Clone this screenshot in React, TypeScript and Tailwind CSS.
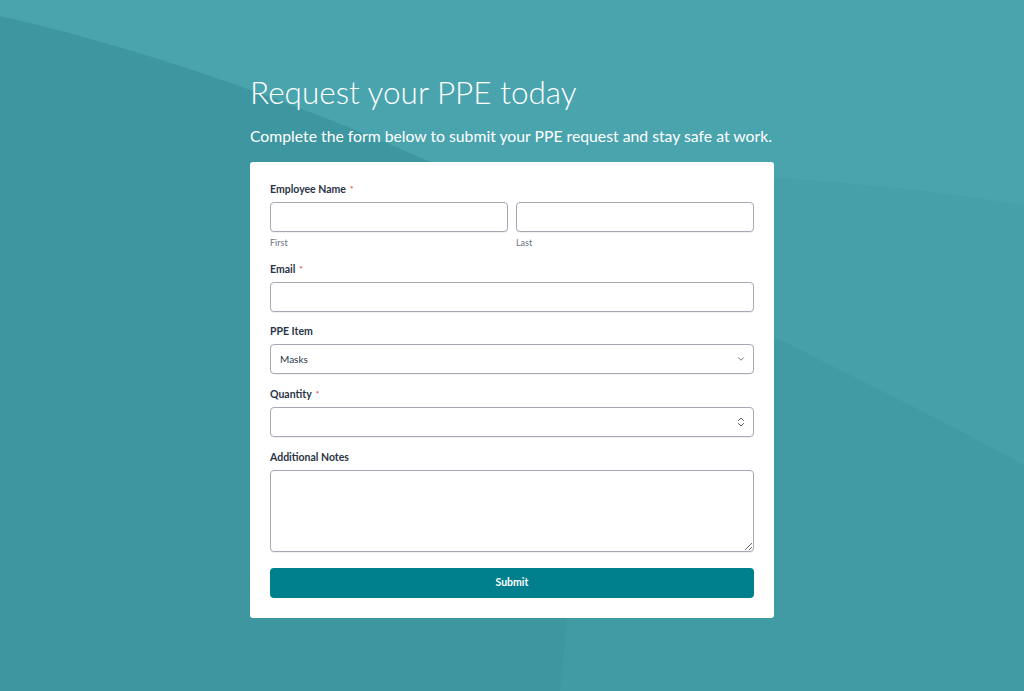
import { ChevronDown, ChevronsUpDown } from "lucide-react";

const labelCls =
  "flex h-[14px] items-center gap-[4px] text-[10.5px] font-bold leading-[14px] text-[#2a3446]";
const inputCls =
  "block h-[30px] w-full rounded-[4px] border border-[#a5a9b4] bg-white px-[9px] text-[10px] text-[#2a3446] shadow-[0_1px_1px_rgba(0,0,0,0.06)] outline-none";

function Label({ text, required }: { text: string; required?: boolean }) {
  return (
    <label className={labelCls}>
      {text}
      {required && <span className="text-[8px] text-[#e0463f]">*</span>}
    </label>
  );
}

function Background() {
  return (
    <svg
      className="absolute inset-0 h-full w-full"
      viewBox="0 0 1024 691"
      preserveAspectRatio="none"
      aria-hidden
    >
      <rect width="1024" height="691" fill="#4aa4ae" />
      <path
        d="M0,16 C150,50 320,110 470,180 C620,168 820,172 1024,205 L1024,691 L0,691 Z"
        fill="#46a0aa"
      />
      <path
        d="M0,16 C150,50 320,110 470,180 C560,260 600,500 640,691 L0,691 Z"
        fill="#3e97a0"
      />
      <path
        d="M600,300 C700,310 760,325 820,360 C900,400 960,430 1024,465 L1024,691 L560,691 Z"
        fill="#419ba4"
      />
    </svg>
  );
}

export default function App() {
  return (
    <div className="relative h-[691px] w-full overflow-hidden font-['Lato',sans-serif]">
      <Background />
      <div className="relative mx-auto w-[524px] pt-[72px]">
        <h1 className="whitespace-nowrap text-[31.5px] font-light leading-[40px] text-white">
          Request your PPE today
        </h1>
        <p className="mt-[14px] whitespace-nowrap text-[15.75px] leading-[20px] text-white">
          Complete the form below to submit your PPE request and stay safe at work.
        </p>

        <form className="mt-[16px] rounded-[3px] bg-white px-[20px] pb-[20px] pt-[20px]">
          <Label text="Employee Name" required />
          <div className="mt-[6px] grid grid-cols-2 gap-[8px]">
            <div>
              <input className={inputCls} />
              <div className="mt-[4px] h-[13px] text-[9px] leading-[13px] text-[#6b7280]">
                First
              </div>
            </div>
            <div>
              <input className={inputCls} />
              <div className="mt-[4px] h-[13px] text-[9px] leading-[13px] text-[#6b7280]">
                Last
              </div>
            </div>
          </div>

          <div className="mt-[13px]">
            <Label text="Email" required />
            <input className={`mt-[6px] ${inputCls}`} />
          </div>

          <div className="mt-[12px]">
            <Label text="PPE Item" />
            <div className="relative mt-[6px]">
              <select className={`appearance-none ${inputCls}`} defaultValue="Masks">
                <option>Masks</option>
                <option>Gloves</option>
                <option>Face Shields</option>
              </select>
              <ChevronDown
                className="pointer-events-none absolute right-[8px] top-[10px] h-[10px] w-[10px] text-[#4b5563]"
                strokeWidth={2}
              />
            </div>
          </div>

          <div className="mt-[13px]">
            <Label text="Quantity" required />
            <div className="relative mt-[6px]">
              <input className={inputCls} />
              <ChevronsUpDown
                className="pointer-events-none absolute right-[7px] top-[9px] h-[12px] w-[12px] text-[#4b5563]"
                strokeWidth={2}
              />
            </div>
          </div>

          <div className="mt-[13px]">
            <Label text="Additional Notes" />
            <textarea className="mt-[6px] block h-[82px] w-full rounded-[4px] border border-[#a5a9b4] bg-white px-[9px] py-[6px] text-[10px] shadow-[0_1px_1px_rgba(0,0,0,0.06)] outline-none" />
          </div>

          <button
            type="button"
            className="mt-[16px] block h-[30px] w-full rounded-[4px] bg-[#00808c] text-[10.5px] font-bold text-white"
          >
            Submit
          </button>
        </form>
      </div>
    </div>
  );
}
